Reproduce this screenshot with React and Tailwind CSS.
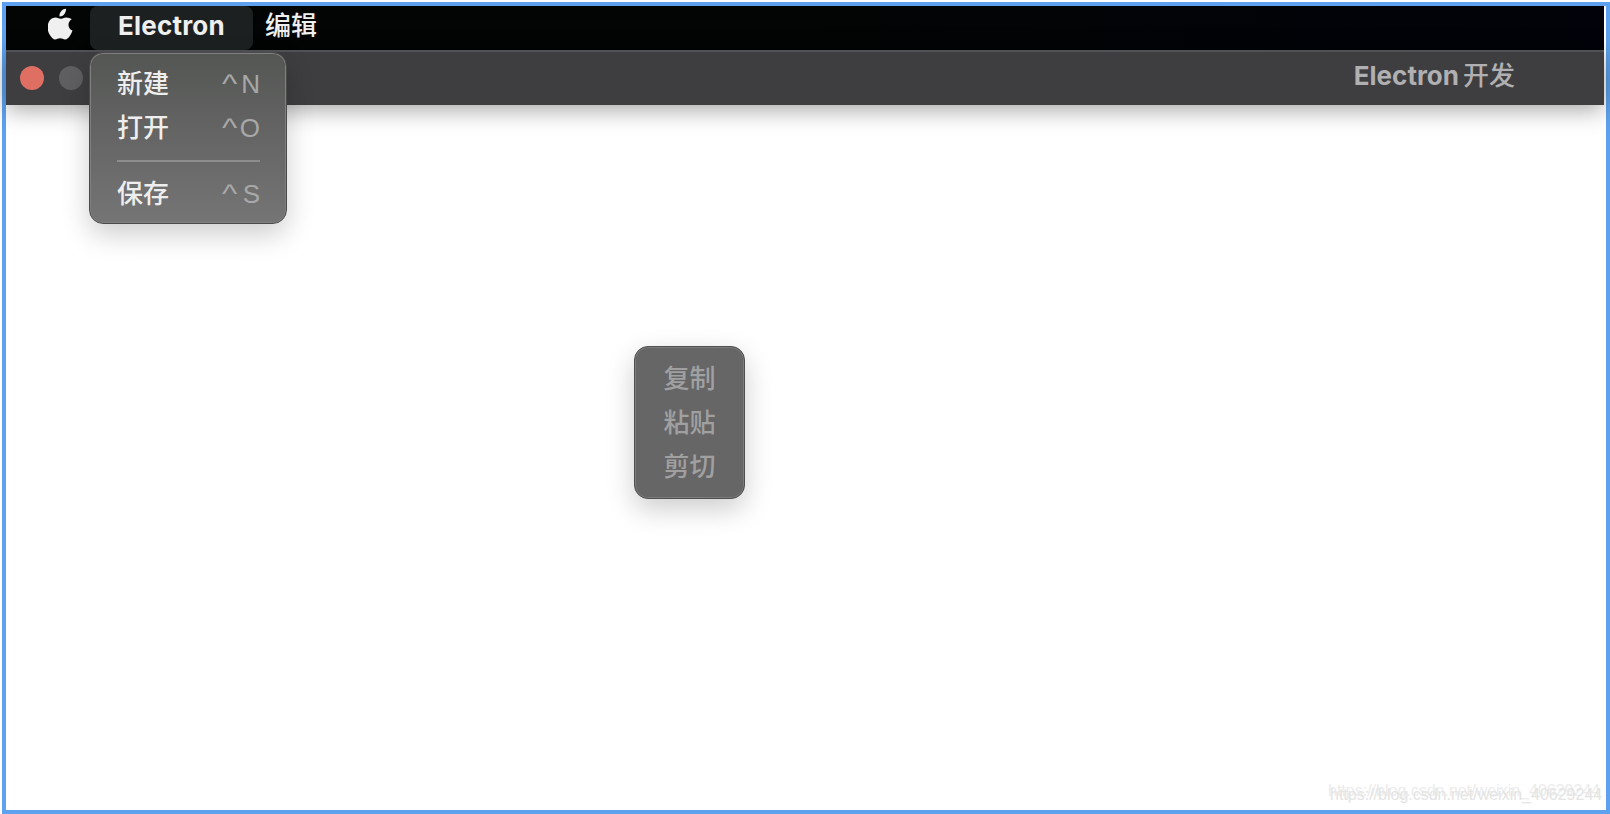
const cjk = "font-['Inter','Liberation_Sans','Noto_Sans_CJK_SC',sans-serif]";
const keys = "font-['Liberation_Sans',sans-serif]";

function MenuRow({ label, keyName }) {
  return (
    <div className="flex h-11 items-center justify-between pl-[27px] pr-[24px]">
      <span className="text-[26px] font-medium leading-none text-[#eeeeee]">{label}</span>
      <span className={`flex w-[40px] items-baseline justify-between text-[26px] leading-none tracking-[2px] text-[#a8a8a8] ${keys}`}>
        <span className="inline-block origin-left scale-x-[1.25]">^</span>
        <span>{keyName}</span>
      </span>
    </div>
  );
}

export default function App() {
  return (
    <div className={`relative h-[814px] w-[1610px] overflow-hidden bg-white pl-[2px] pt-[2px] ${cjk}`}>
      <div className="h-full w-full border-4 border-[#5ea2ef] pr-[2px]">
        <div className="flex h-[44px] items-start bg-gradient-to-r from-[#020504] via-[#020504] to-[#02020a]">
          <svg className="ml-[42px] mt-[2px] h-[32px] w-[26px]" viewBox="0 0 24 29" fill="#f0f0f0">
            <path d="M16.6 0.5c.2 2-0.6 3.7-1.6 4.9-1.1 1.3-2.8 2.2-4.4 2.1-.2-1.9.7-3.8 1.7-4.9C13.4 1.3 15.2.5 16.6.5zM21.900 10c-1.900 1.200-3 3-3 5.100 0 2.400 1.400 4.500 3.700 5.500-.6 1.700-1.300 3.200-2.300 4.700-1.300 1.900-2.700 3.400-4.500 3.400-1.800 0-2.500-1.100-4.600-1.100-2.100 0-2.900 1.100-4.600 1.100-1.800 0-3.200-1.700-4.600-3.700C.2 22.700-.6 19.400-.3 16.500c.3-4.500 3.400-8 7.300-8 1.900 0 3.400 1.200 4.700 1.200 1.200 0 3-1.300 5.100-1.300 1.900 0 3.800.7 5.100 1.600z" />
          </svg>
          <div className="ml-[16px] flex h-[44px] w-[163px] items-center rounded-lg bg-[#1c2020] pb-[4px] pl-[28px]">
            <span className="text-[26px] font-bold leading-none tracking-[0.2px] text-[#efefef]">Electron</span>
          </div>
          <span className="ml-[12px] mt-[7px] text-[26px] font-medium leading-none text-[#efefef]">编辑</span>
        </div>
        <div className="flex h-[55px] items-center justify-between border-t-2 border-[#515255] bg-[#3e3e40] pl-[14px] pr-[89px] shadow-[0_4px_24px_rgba(0,0,0,0.38)]">
          <div className="flex gap-[15px] pb-[2px]">
            <div className="h-6 w-6 rounded-full bg-[#e06f63]" />
            <div className="h-6 w-6 rounded-full bg-[#5f5f62]" />
          </div>
          <span className="flex gap-[4px] pb-[5px] text-[26px] font-bold leading-none text-[#b0b0b2]">
            <span>Electron</span>
            <span className="font-medium">开发</span>
          </span>
        </div>
      </div>
      <div className="absolute left-[89px] top-[52px] w-[198px] rounded-[14px] border border-[#4a4a4a] bg-gradient-to-b from-[#545654] to-[#757575] pb-[7px] pt-[9px] shadow-[inset_0_0_0_1px_#7f7f7f,0_10px_28px_rgba(0,0,0,0.2)]">
        <MenuRow label="新建" keyName="N" />
        <MenuRow label="打开" keyName="O" />
        <div className="ml-[27px] mr-[26px] my-[10px] h-0.5 bg-[#8d8d8d]" />
        <MenuRow label="保存" keyName="S" />
      </div>
      <div className="absolute left-[634px] top-[346px] flex w-[111px] flex-col rounded-[14px] border border-[#4f4f4f] bg-[#666667] pb-[9px] pt-[10px] shadow-[inset_0_0_0_1px_#7c7c7c,0_10px_28px_rgba(0,0,0,0.2)]">
        <span className="flex h-11 items-center justify-center text-[26px] font-medium leading-none text-[#a0a0a1]">复制</span>
        <span className="flex h-11 items-center justify-center text-[26px] font-medium leading-none text-[#a0a0a1]">粘贴</span>
        <span className="flex h-11 items-center justify-center text-[26px] font-medium leading-none text-[#a0a0a1]">剪切</span>
      </div>
      <div className={`absolute left-[1328px] top-[783px] text-[16px] leading-none text-[#ececec] ${keys}`}>https://blog.csdn.net/weixin_40629244</div>
      <div className={`absolute left-[1330px] top-[787px] text-[16px] leading-none text-[#e4e4e4] ${keys}`}>https://blog.csdn.net/weixin_40629244</div>
    </div>
  );
}
